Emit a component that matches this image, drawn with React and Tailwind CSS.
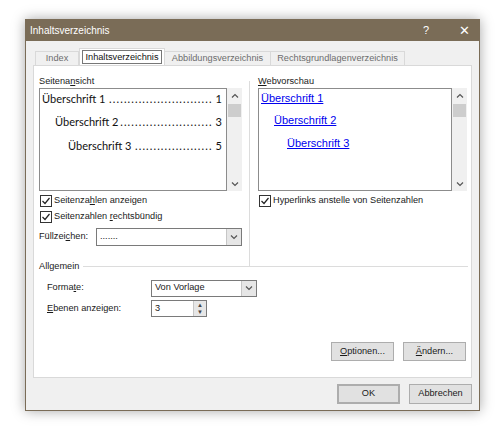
import React from 'react';

const UI = "font-['Liberation_Sans',Arial,sans-serif]";

function Chevron({ dir = 'down' }) {
    return (
        <svg width="8" height="6" viewBox="0 0 8 6">
            <path
                d={dir === 'up' ? 'M1 4.5 L4 1.5 L7 4.5' : 'M1 1.5 L4 4.5 L7 1.5'}
                fill="none"
                stroke="#555"
                strokeWidth="1.2"
            />
        </svg>
    );
}

function Scrollbar() {
    return (
        <div className="w-[15px] shrink-0 h-full bg-[#f0f0f0] flex flex-col items-center">
            <div className="h-[16px] flex items-center justify-center">
                <Chevron dir="up" />
            </div>
            <div className="w-[13px] h-[13px] bg-[#cdcdcd]" />
            <div className="flex-1" />
            <div className="h-[14px] flex items-center justify-center">
                <Chevron />
            </div>
        </div>
    );
}

function Check({ children }) {
    return (
        <div className="flex items-center h-[16px] gap-[2px] ml-[1px]">
            <span className="w-[12px] h-[12px] border border-[#333] bg-white flex items-center justify-center">
                <svg width="10" height="10" viewBox="0 0 10 10">
                    <path d="M1.5 5 L4 7.5 L8.5 2" fill="none" stroke="#222" strokeWidth="1.2" />
                </svg>
            </span>
            <span>{children}</span>
        </div>
    );
}

function Select({ value, className }) {
    return (
        <div className={`border border-[#7a7a7a] bg-white flex ${className}`}>
            <span className="flex-1 pl-[3px] flex items-center">{value}</span>
            <span className="w-[15px] border-l border-[#c6c6c6] bg-[#e6e6e6] flex items-center justify-center">
                <Chevron />
            </span>
        </div>
    );
}

function TocLine({ title, dots, page, indent }) {
    return (
        <div className={`flex h-[20px] items-center pr-[4px] min-w-0 ${indent}`}>
            <span className="whitespace-nowrap shrink-0">{title}</span>
            <span className="flex-1 min-w-0 text-right whitespace-nowrap tracking-[1.1px]">{dots}</span>
            <span className="shrink-0 pl-[3px]">{page}</span>
        </div>
    );
}

function Button({ children, className = '' }) {
    return (
        <div className={`w-[63px] flex items-center justify-center bg-[#e1e1e1] border border-[#adadad] ${className}`}>
            {children}
        </div>
    );
}

export default function App() {
    return (
        <div className={`w-[500px] h-[427px] bg-white pt-[19px] pl-[25px] text-[9.2px] text-[#1a1a1a] ${UI}`}>
            <div className="w-[455px] h-[392px] flex flex-col border border-[#7a6c57] shadow-[0_0_12px_rgba(0,0,0,0.35)]">
                {/* title bar */}
                <div className="h-[21px] bg-[#7a6c57] flex items-center text-white text-[10px] pl-[4px]">
                    <span className="flex-1">Inhaltsverzeichnis</span>
                    <span className="w-[20px] text-center text-[11px]">?</span>
                    <span className="w-[18px]" />
                    <span className="w-[20px] text-center text-[13px] mr-[5px]">✕</span>
                </div>

                <div className="flex-1 bg-[#f0f0f0] flex flex-col px-[7px] pt-[7px]">
                    {/* tabs */}
                    <div className="h-[17px] flex items-end text-[#6d6d6d]">
                        <div className="ml-[2px] w-[44px] h-[14px] border border-b-0 border-[#d9d9d9] flex items-center justify-center">
                            Index
                        </div>
                        <div className="w-[86px] h-[17px] bg-white border border-b-0 border-[#d9d9d9] flex items-center justify-center text-[#111]">
                            <span className="border border-[#777] px-[2px] leading-[12px]">Inhaltsverzeichnis</span>
                        </div>
                        <div className="w-[106px] h-[14px] border border-b-0 border-l-0 border-[#d9d9d9] flex items-center justify-center">
                            Abbildungsverzeichnis
                        </div>
                        <div className="w-[134px] h-[14px] border border-b-0 border-l-0 border-[#d9d9d9] flex items-center justify-center">
                            Rechtsgrundlagenverzeichnis
                        </div>
                    </div>

                    {/* tab panel */}
                    <div className="h-[313px] bg-white border border-[#d9d9d9] flex flex-col pt-[9px]">
                        <div className="flex h-[182px]">
                            {/* left column */}
                            <div className="ml-[5px] w-[203px] shrink-0 flex flex-col">
                                <div className="h-[13px] leading-[13px]">
                                    Seitena<span className="underline">n</span>sicht
                                </div>
                                <div className="h-[103px] flex">
                                    <div className="flex-1 min-w-0 border border-[#8c8c8c] pl-[2px] font-['Lato',sans-serif] text-[11px] text-[#111]">
                                        <TocLine title="Überschrift 1" dots="............................" page="1" indent="" />
                                        <TocLine title="Überschrift 2" dots="........................." page="3" indent="pl-[13px] mt-[3px]" />
                                        <TocLine title="Überschrift 3" dots="....................." page="5" indent="pl-[26px] mt-[4px]" />
                                    </div>
                                    <Scrollbar />
                                </div>
                                <div className="mt-[2px]">
                                    <Check>
                                        Seitenza<span className="underline">h</span>len anzeigen
                                    </Check>
                                    <Check>
                                        Seitenzahlen <span className="underline">r</span>echtsbündig
                                    </Check>
                                </div>
                                <div className="mt-[3px] flex items-center">
                                    <span className="w-[57px]">
                                        Füllzei<span className="underline">c</span>hen:
                                    </span>
                                    <Select value="......." className="w-[146px] h-[18px]" />
                                </div>
                            </div>

                            {/* divider */}
                            <div className="ml-[7px] mt-[6px] w-px h-[185px] bg-[#dcdcdc]" />

                            {/* right column */}
                            <div className="ml-[8px] w-[209px] shrink-0 flex flex-col">
                                <div className="h-[13px] leading-[13px]">
                                    <span className="underline">W</span>ebvorschau
                                </div>
                                <div className="h-[103px] flex">
                                    <div className="flex-1 min-w-0 border border-[#8c8c8c] pl-[2px] text-[11px] text-[#0000ee] underline">
                                        <div className="h-[18px] flex items-center">Überschrift 1</div>
                                        <div className="h-[18px] flex items-center mt-[4px] pl-[13px]">Überschrift 2</div>
                                        <div className="h-[18px] flex items-center mt-[5px] pl-[26px]">Überschrift 3</div>
                                    </div>
                                    <Scrollbar />
                                </div>
                                <div className="mt-[2px]">
                                    <Check>Hyperlinks anstelle von Seitenzahlen</Check>
                                </div>
                            </div>
                        </div>

                        {/* Allgemein */}
                        <div className="mt-[3px] h-[13px] flex items-center pl-[5px] pr-[3px]">
                            <span>Allgemein</span>
                            <span className="flex-1 h-px bg-[#dcdcdc] ml-[4px]" />
                        </div>
                        <div className="mt-[7px] h-[16px] flex items-center pl-[13px]">
                            <span className="w-[104px]">
                                Forma<span className="underline">t</span>e:
                            </span>
                            <Select value="Von Vorlage" className="w-[106px] h-[17px]" />
                        </div>
                        <div className="mt-[4px] h-[17px] flex items-center pl-[13px]">
                            <span className="w-[104px]">
                                <span className="underline">E</span>benen anzeigen:
                            </span>
                            <div className="w-[56px] h-[17px] border border-[#7a7a7a] bg-white flex">
                                <span className="flex-1 pl-[3px] flex items-center">3</span>
                                <span className="w-[13px] border-l border-[#c6c6c6] bg-[#e6e6e6] flex flex-col items-center justify-center text-[6px] leading-[7px] text-[#444]">
                                    <span>▲</span>
                                    <span>▼</span>
                                </span>
                            </div>
                        </div>

                        <div className="mt-[25px] h-[19px] flex justify-end gap-[9px] pr-[5px]">
                            <Button>
                                <span>
                                    <span className="underline">O</span>ptionen...
                                </span>
                            </Button>
                            <Button>
                                <span>
                                    <span className="underline">Ä</span>ndern...
                                </span>
                            </Button>
                        </div>
                    </div>

                    {/* dialog buttons */}
                    <div className="mt-[6px] h-[20px] flex justify-end gap-[9px]">
                        <Button className="border-2 border-[#3d8ee0]">OK</Button>
                        <Button>Abbrechen</Button>
                    </div>
                </div>
            </div>
        </div>
    );
}
